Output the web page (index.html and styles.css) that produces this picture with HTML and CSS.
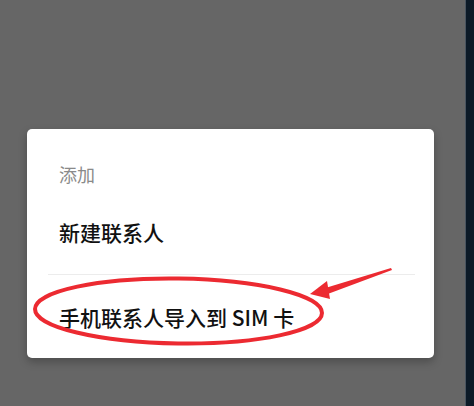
FILE: index.html
```html
<!DOCTYPE html>
<html lang="zh">
<head>
  <meta charset="UTF-8">
  <title>添加</title>
  <link rel="stylesheet" href="styles.css">
</head>
<body>
<div class="screen">
  <div class="dialog">
    <div class="dialog-title">添加</div>
    <div class="dialog-item first">新建联系人</div>
    <hr class="divider">
    <div class="dialog-item">手机联系人导入到 SIM 卡</div>
  </div>

  <!-- red annotation drawn over the screenshot -->
  <svg class="mark" width="466" height="406" viewBox="0 0 466 406">
    <ellipse cx="178.5" cy="311" rx="143.5" ry="32.5" fill="none" stroke="#ec2a31" stroke-width="4" transform="rotate(0.8 178.5 311)"/>
    <polygon points="391,268 322,289 325,295 392,270" fill="#ec2a31"/>
    <polygon points="310,294 327,281 330,299" fill="#ec2a31"/>
  </svg>
</div>
<div class="strip"></div>
</body>
</html>
```

FILE: styles.css
```css
/* Page */
body {
  margin: 0;
  height: 406px;
  display: flex;
  overflow: hidden;
  font-family: "Noto Sans CJK SC", "Noto Sans", sans-serif;
}

.screen {
  flex: 1;
  position: relative;
  background-color: #666666;
  padding-top: 129px;
}

.strip {
  width: 8px;
  background-color: #0c1a27;
  border-left: 1px solid #4a5560;
}

/* Dialog card */
.dialog {
  width: 407px;
  height: 229px;
  box-sizing: border-box;
  margin-left: 27px;
  padding-top: 30px;
  background-color: #ffffff;
  border-radius: 5px;
  box-shadow: 0 4px 8px rgba(0, 0, 0, 0.25);
}

.dialog-title {
  padding-left: 32px;
  line-height: 30px;
  font-size: 18px;
  color: #8a8a8a;
}

.dialog-item {
  padding-left: 32px;
  line-height: 58px;
  font-size: 21px;
  font-weight: 500;
  color: #111111;
}

.dialog-item.first {
  margin-top: 14px;
}

.divider {
  border: 0;
  border-top: 1px solid #ececec;
  margin: 13px 19px 13px 21px;
}

/* Annotation */
.mark {
  position: absolute;
  top: 0;
  left: 0;
}
```
